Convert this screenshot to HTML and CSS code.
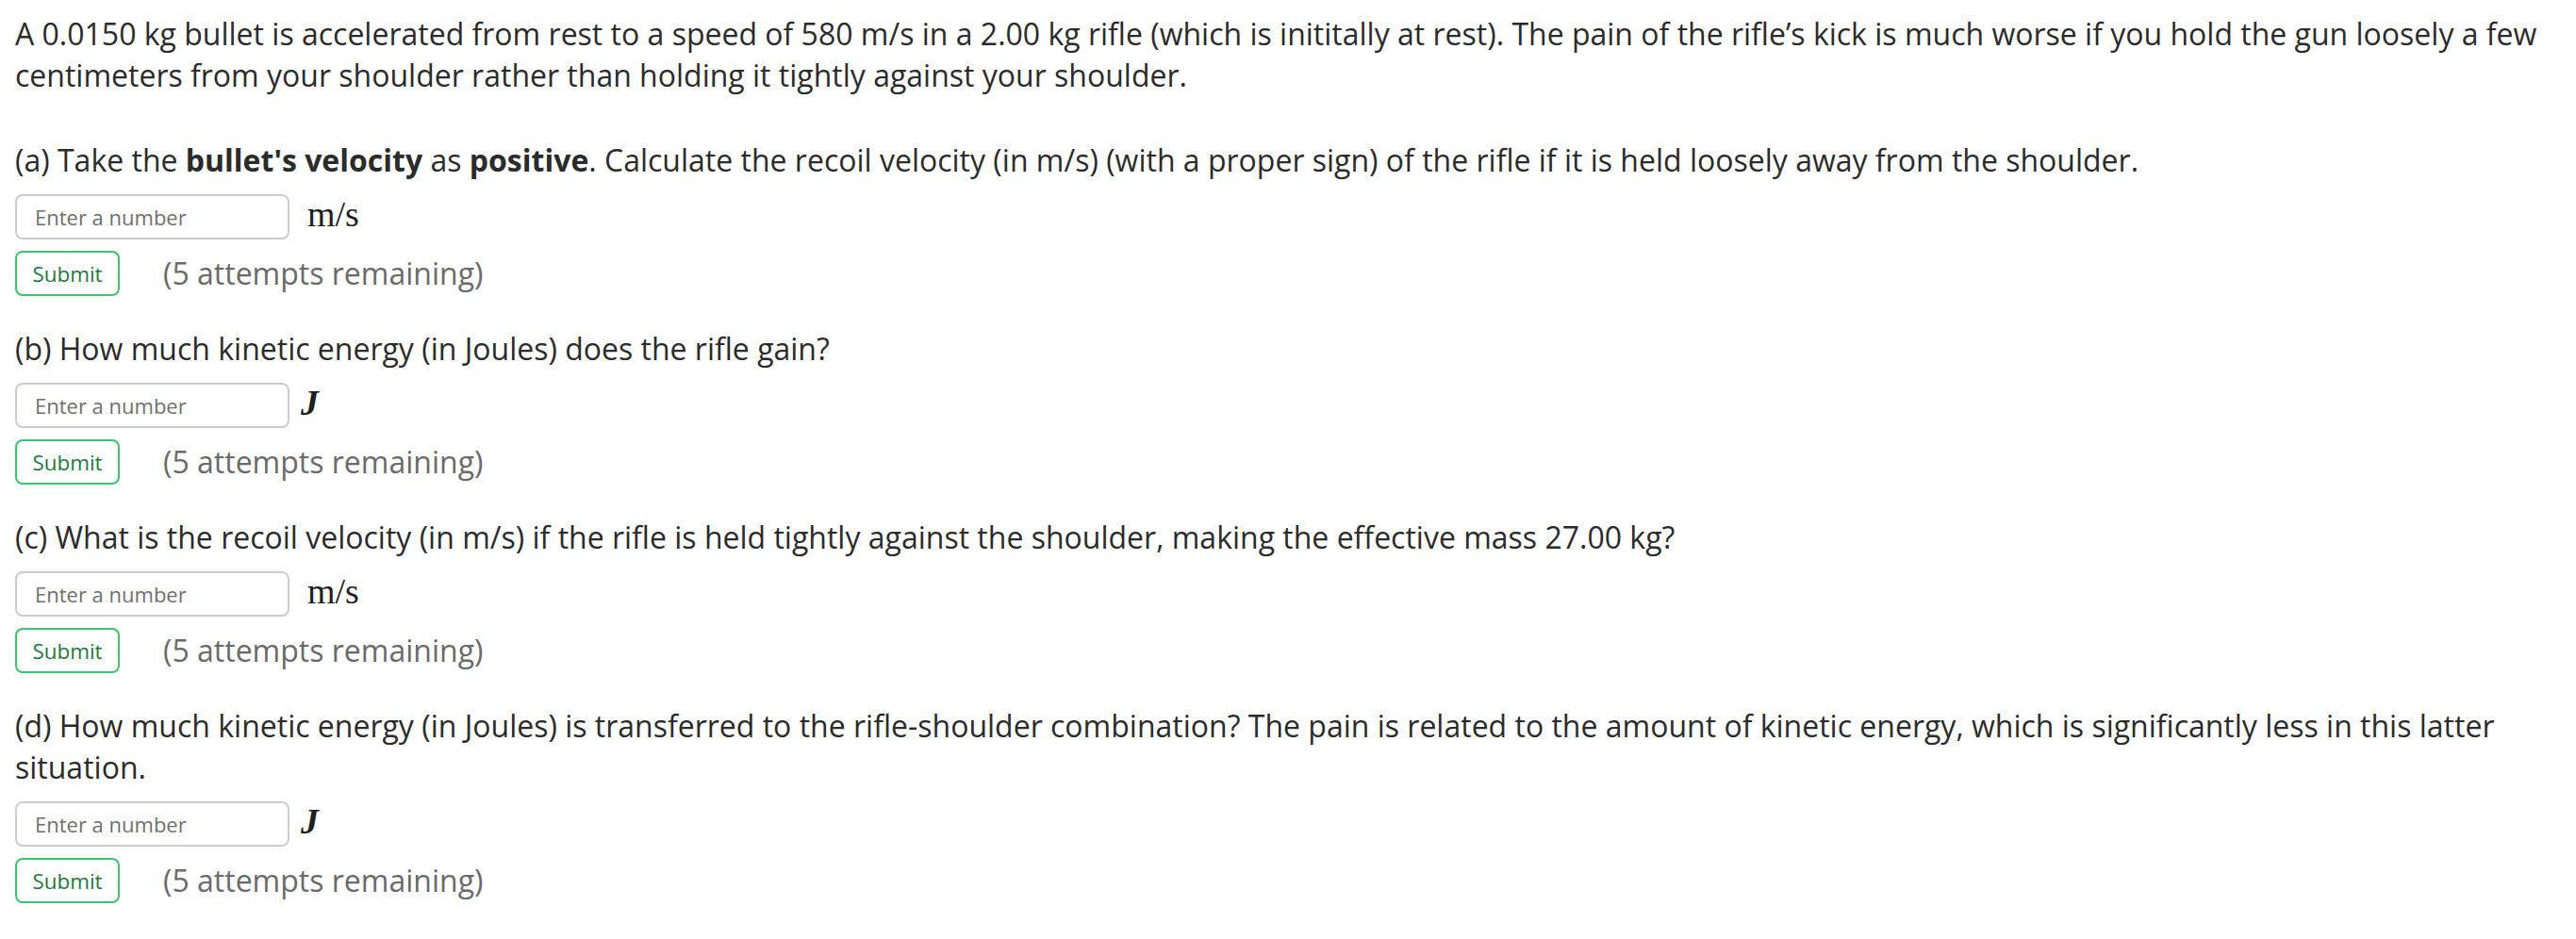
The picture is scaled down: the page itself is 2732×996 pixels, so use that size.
FILE: index.html
```html
<!DOCTYPE html>
<html>
<head>
<meta charset="utf-8">
<link rel="stylesheet" href="styles.css">
</head>
<body>
<div class="page">
  <p class="intro">A 0.0150 kg bullet is accelerated from rest to a speed of 580 m/s in a 2.00 kg rifle (which is inititally at rest). The pain of the rifle’s kick is much worse if you hold the gun loosely a few centimeters from your shoulder rather than holding it tightly against your shoulder.</p>

  <div class="part">
    <p class="question">(a) Take the <b>bullet's velocity</b> as <b>positive</b>. Calculate the recoil velocity (in m/s) (with a proper sign) of the rifle if it is held loosely away from the shoulder.</p>
    <div class="answer-row">
      <input class="num" type="text" placeholder="Enter a number">
      <span class="unit">m/s</span>
    </div>
    <div class="submit-row">
      <button class="submit">Submit</button>
      <span class="attempts">(5 attempts remaining)</span>
    </div>
  </div>

  <div class="part">
    <p class="question">(b) How much kinetic energy (in Joules) does the rifle gain?</p>
    <div class="answer-row">
      <input class="num" type="text" placeholder="Enter a number">
      <span class="unit unit-j">J</span>
    </div>
    <div class="submit-row">
      <button class="submit">Submit</button>
      <span class="attempts">(5 attempts remaining)</span>
    </div>
  </div>

  <div class="part">
    <p class="question">(c) What is the recoil velocity (in m/s) if the rifle is held tightly against the shoulder, making the effective mass 27.00 kg?</p>
    <div class="answer-row">
      <input class="num" type="text" placeholder="Enter a number">
      <span class="unit">m/s</span>
    </div>
    <div class="submit-row">
      <button class="submit">Submit</button>
      <span class="attempts">(5 attempts remaining)</span>
    </div>
  </div>

  <div class="part">
    <p class="question">(d) How much kinetic energy (in Joules) is transferred to the rifle-shoulder combination? The pain is related to the amount of kinetic energy, which is significantly less in this latter situation.</p>
    <div class="answer-row">
      <input class="num" type="text" placeholder="Enter a number">
      <span class="unit unit-j">J</span>
    </div>
    <div class="submit-row">
      <button class="submit">Submit</button>
      <span class="attempts">(5 attempts remaining)</span>
    </div>
  </div>
</div>
</body>
</html>
```

FILE: styles.css
```css
html, body {
  margin: 0;
  padding: 0;
  background: #ffffff;
}

.page {
  padding: 14px 16px 0 16px;
  font-family: "Open Sans", "Liberation Sans", sans-serif;
  font-size: 32px;
  line-height: 44px;
  color: #2b2b2b;
}

.intro {
  margin: 0 0 46px 0;
}

.part {
  margin-bottom: 34px;
}

.question {
  margin: 0;
}

.question b {
  font-weight: 700;
}

.answer-row {
  display: flex;
  align-items: center;
  margin-top: 14px;
  height: 48px;
}

.num {
  box-sizing: border-box;
  width: 291px;
  height: 48px;
  border: 2px solid #cccccc;
  border-radius: 8px;
  padding: 0 0 0 19px;
  font-family: "Open Sans", "Liberation Sans", sans-serif;
  font-size: 22px;
  color: #333333;
  background: #ffffff;
  outline: none;
}

.num::placeholder {
  color: #6f6f6f;
  opacity: 1;
}

.unit {
  margin-left: 19px;
  font-family: "Liberation Serif", "DejaVu Serif", serif;
  font-size: 38px;
  color: #1f1f1f;
  line-height: 1;
  position: relative;
  top: -3px;
}

.unit-j {
  font-style: italic;
  font-weight: 700;
  margin-left: 12px;
}

.submit-row {
  display: flex;
  align-items: center;
  margin-top: 12px;
  height: 48px;
}

.submit {
  box-sizing: border-box;
  height: 48px;
  width: 111px;
  padding: 0;
  border: 2px solid #3cc56f;
  border-radius: 8px;
  background: #ffffff;
  color: #1d7a3e;
  font-family: "Open Sans", "Liberation Sans", sans-serif;
  font-size: 22.4px;
}

.attempts {
  margin-left: 46px;
  color: #6a6a6a;
  font-size: 32px;
}
```
